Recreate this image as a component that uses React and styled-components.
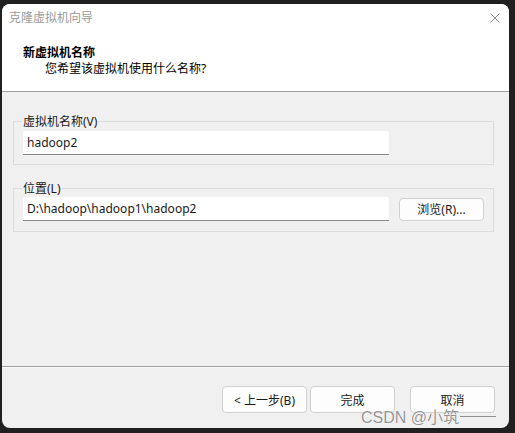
import React from "react";
import styled, { createGlobalStyle } from "styled-components";

const GlobalStyle = createGlobalStyle`
  html, body {
    margin: 0;
    padding: 0;
    background: #202020;
  }
  body {
    font-family: "Noto Sans", "Noto Sans CJK SC", sans-serif;
    font-size: 12px;
    color: #1a1a1a;
  }
`;

const Screen = styled.div`
  width: 515px;
  height: 433px;
  box-sizing: border-box;
  padding: 4px 6px 5px 2px;
  display: flex;
`;

const Dialog = styled.div`
  position: relative;
  flex: 1;
  display: flex;
  flex-direction: column;
  background: #f0f0f0;
  border-radius: 8px;
  overflow: hidden;
`;

const TitleBar = styled.div`
  height: 28px;
  flex: none;
  display: flex;
  align-items: center;
  justify-content: space-between;
  padding: 0 9px 0 7px;
  background: #fff;
  color: #9a9a9a;
  line-height: 16px;
`;

const CloseButton = styled.svg`
  width: 10px;
  height: 10px;
  stroke: #8a8a8a;
  stroke-width: 1;
`;

const Header = styled.div`
  height: 60px;
  flex: none;
  box-sizing: border-box;
  padding: 13px 0 0 21px;
  background: #fff;
  border-bottom: 1px solid #a0a0a0;
  line-height: 16px;
`;

const HeaderTitle = styled.div`
  font-weight: bold;
  color: #000;
`;

const HeaderSub = styled.div`
  padding-left: 22px;
  color: #000;
`;

const Body = styled.div`
  height: 274px;
  flex: none;
  box-sizing: border-box;
  padding: 29px 15px 0 11px;
  display: flex;
  flex-direction: column;
  gap: 23px;
`;

const Group = styled.div`
  height: 44px;
  box-sizing: border-box;
  border: 1px solid #dcdcdc;
  padding: 0 8px 0 9px;
`;

const Legend = styled.div`
  display: table;
  margin: -8px 0 ${({ $gap }) => $gap}px -1px;
  padding: 0 1px;
  line-height: 16px;
  background: #f0f0f0;
`;

const FieldRow = styled.div`
  display: flex;
  align-items: center;
  gap: 10px;
`;

const TextBox = styled.div`
  width: 366px;
  height: 24px;
  box-sizing: border-box;
  padding-left: 4px;
  display: flex;
  align-items: center;
  background: #fff;
  border-bottom: 1px solid #8a8a8a;
  border-radius: 2px 2px 0 0;
`;

const Button = styled.button`
  width: 85px;
  height: ${({ $h }) => $h || 27}px;
  padding: 0;
  border: 1px solid #d0d0d0;
  border-radius: 4px;
  background: #fdfdfd;
  font-family: inherit;
  font-size: 12px;
  color: #1a1a1a;
`;

const Footer = styled.div`
  flex: 1;
  border-top: 1px solid #a0a0a0;
  box-shadow: inset 0 1px #fafafa;
  display: flex;
  justify-content: flex-end;
  align-items: flex-start;
  padding: 19px 14px 0 0;
`;

const ButtonGroup = styled.div`
  display: flex;
  gap: ${({ $gap }) => $gap}px;
  margin-left: ${({ $ml }) => $ml || 0}px;
`;

const Watermark = styled.div`
  position: absolute;
  left: 359px;
  top: 400px;
  display: flex;
  align-items: center;
  font-family: "Liberation Sans", "Noto Sans CJK SC", sans-serif;
  font-size: 16px;
  color: rgba(110, 110, 110, 0.75);
  text-shadow: 0 0 1px #fff, 0 0 1px #fff;
  white-space: nowrap;

  &::after {
    content: "";
    width: 36px;
    height: 1px;
    margin-left: 1px;
    background: rgba(110, 110, 110, 0.75);
  }
`;

export default function App() {
  return (
    <>
      <GlobalStyle />
      <Screen>
        <Dialog>
          <TitleBar>
            <span>克隆虚拟机向导</span>
            <CloseButton viewBox="0 0 10 10" fill="none">
              <path d="M0.5 0.5 L9.5 9.5 M9.5 0.5 L0.5 9.5" />
            </CloseButton>
          </TitleBar>
          <Header>
            <HeaderTitle>新虚拟机名称</HeaderTitle>
            <HeaderSub>您希望该虚拟机使用什么名称?</HeaderSub>
          </Header>
          <Body>
            <Group>
              <Legend $gap={1}>虚拟机名称(V)</Legend>
              <FieldRow>
                <TextBox>hadoop2</TextBox>
              </FieldRow>
            </Group>
            <Group>
              <Legend $gap={0}>位置(L)</Legend>
              <FieldRow>
                <TextBox>D:\hadoop\hadoop1\hadoop2</TextBox>
                <Button $h={23}>浏览(R)...</Button>
              </FieldRow>
            </Group>
          </Body>
          <Footer>
            <ButtonGroup $gap={3}>
              <Button>&lt; 上一步(B)</Button>
              <Button>完成</Button>
            </ButtonGroup>
            <ButtonGroup $ml={15}>
              <Button>取消</Button>
            </ButtonGroup>
          </Footer>
          <Watermark>CSDN @小筑</Watermark>
        </Dialog>
      </Screen>
    </>
  );
}
